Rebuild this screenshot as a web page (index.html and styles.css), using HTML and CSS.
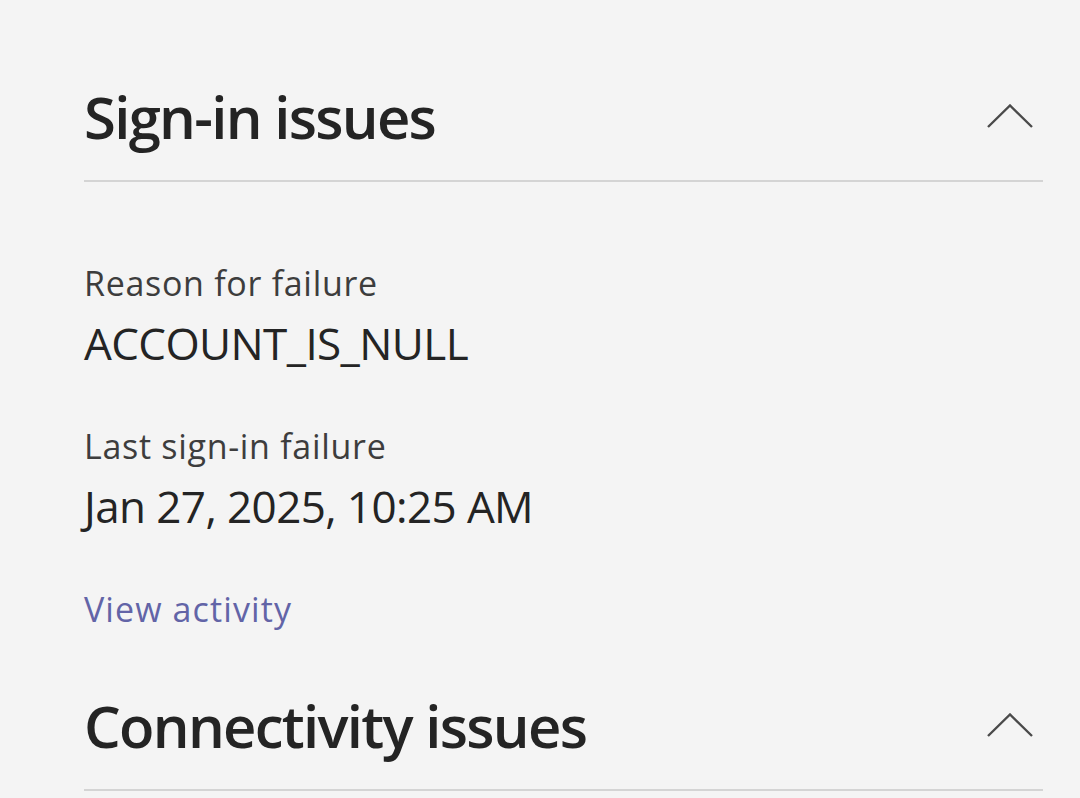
FILE: index.html
```html
<!DOCTYPE html>
<html lang="en">
<head>
<meta charset="utf-8">
<link rel="stylesheet" href="styles.css">
<title>Sign-in issues</title>
</head>
<body>
<main class="panel">
  <section class="section">
    <div class="section-head">
      <h2 class="section-title">Sign-in issues</h2>
      <svg class="chevron" viewBox="0 0 48 26" width="48" height="26" aria-hidden="true"><polyline points="2,23 24,1.5 46,23" fill="none" stroke="#4a4a4a" stroke-width="2.4" stroke-linejoin="miter"/></svg>
    </div>
    <div class="section-body">
      <div class="field">
        <div class="field-label">Reason for failure</div>
        <div class="field-value">ACCOUNT_IS_NULL</div>
      </div>
      <div class="field">
        <div class="field-label">Last sign-in failure</div>
        <div class="field-value">Jan 27, 2025, 10:25 AM</div>
      </div>
      <a class="link" href="#">View activity</a>
    </div>
  </section>
  <section class="section">
    <div class="section-head">
      <h2 class="section-title">Connectivity issues</h2>
      <svg class="chevron" viewBox="0 0 48 26" width="48" height="26" aria-hidden="true"><polyline points="2,23 24,1.5 46,23" fill="none" stroke="#4a4a4a" stroke-width="2.4" stroke-linejoin="miter"/></svg>
    </div>
  </section>
</main>
</body>
</html>
```

FILE: styles.css
```css
html, body {
  margin: 0;
  padding: 0;
  background: #f4f4f4;
}
body {
  font-family: "Open Sans", "Noto Sans", "Liberation Sans", sans-serif;
  color: #242424;
  width: 1080px;
  height: 798px;
  overflow: hidden;
}
.panel {
  padding: 82px 37px 0 84px;
}
.section-head {
  display: flex;
  justify-content: space-between;
  align-items: center;
  border-bottom: 2px solid #d4d4d4;
  padding-bottom: 28px;
}
.section-title {
  margin: 0;
  font-size: 58px;
  font-weight: 600;
  line-height: 70px;
  color: #242424;
  letter-spacing: -1.7px;
}
.chevron {
  margin-right: 9px;
  display: block;
  flex: none;
}
.section-body {
  display: flex;
  flex-direction: column;
  align-items: flex-start;
  gap: 43px;
  padding-top: 74px;
  padding-bottom: 55px;
}
.field-label {
  font-size: 34px;
  line-height: 54px;
  color: #3d3d3d;
  letter-spacing: 0.7px;
}
.field-value {
  font-size: 44px;
  line-height: 66px;
  color: #242424;
  letter-spacing: -0.6px;
}
.link {
  display: block;
  font-size: 34px;
  line-height: 54px;
  color: #6264a7;
  text-decoration: none;
  letter-spacing: 1.1px;
}
```
